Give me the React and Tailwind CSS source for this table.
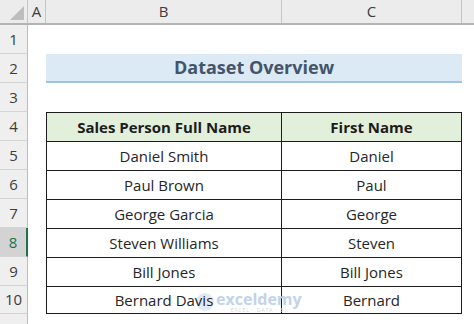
import React from 'react';

const rows = [
  ['Daniel Smith', 'Daniel'],
  ['Paul Brown', 'Paul'],
  ['George Garcia', 'George'],
  ['Steven Williams', 'Steven'],
  ['Bill Jones', 'Bill Jones'],
  ['Bernard Davis', 'Bernard'],
];

const heights = ['h-[29px]', 'h-[29px]', 'h-[29px]', 'h-[29px]', 'h-[29px]', 'h-[29px]', 'h-[29px]', 'h-[29px]', 'h-[29px]', 'h-[28px]', 'h-[29px]'];

const RowNum = ({ n, active }) => (
  <div
    className={`w-[28px] shrink-0 flex items-center justify-center border-b border-[#d4d4d4] text-[15px] ${
      active
        ? 'bg-[#d3d3d3] text-[#217346] border-r-2 border-r-[#217346]'
        : 'bg-[#efefef] text-[#3c3c3c] border-r border-r-[#bdbdbd]'
    }`}
  >
    {n}
  </div>
);

// faint site watermark sitting over the last row
const Watermark = () => (
  <div className="absolute left-[148px] top-[4px] flex items-center gap-[1px] pointer-events-none">
    <svg width="20" height="20" viewBox="0 0 20 20">
      <circle cx="10" cy="10" r="9" fill="#e3eaf5" />
    </svg>
    <div className="flex flex-col items-center leading-none">
      <span className="text-[16px] font-bold text-[#c3d3ea]">exceldemy</span>
      <span className="text-[5px] text-[#cbd5e4] tracking-[1px] mt-[1px]">EXCEL · DATA · BI</span>
    </div>
  </div>
);

export default function App() {
  return (
    <div
      className="w-[474px] h-[324px] overflow-hidden bg-white text-[#262626]"
      style={{ fontFamily: '"Open Sans", "Noto Sans", sans-serif' }}
    >
      {/* column header */}
      <div className="flex h-[25px] bg-[#ececec] border-b-2 border-[#b4b4b4] text-[15px] text-[#3c3c3c]">
        <div className="w-[28px] shrink-0 border-r border-[#c6c6c6] flex items-end justify-end pr-[3px] pb-[3px]">
          <svg width="14" height="14" viewBox="0 0 14 14">
            <polygon points="14,0 14,14 0,14" fill="#bdbdbd" />
          </svg>
        </div>
        <div className="w-[18px] shrink-0 border-r border-[#c6c6c6] flex items-center justify-center">A</div>
        <div className="w-[236px] shrink-0 border-r border-[#c6c6c6] flex items-center justify-center">B</div>
        <div className="w-[180px] shrink-0 border-r border-[#c6c6c6] flex items-center justify-center">C</div>
        <div className="flex-1" />
      </div>

      {/* row 1 */}
      <div className={`flex ${heights[0]}`}>
        <RowNum n={1} />
        <div className="flex-1" />
      </div>

      {/* row 2 */}
      <div className={`flex ${heights[1]}`}>
        <RowNum n={2} />
        <div className="w-[18px] shrink-0" />
        <div className="w-[416px] shrink-0 bg-[#dceaf6] border-b-2 border-[#9fc3e5] flex items-center justify-center text-[18px] font-bold text-[#44546a]">
          Dataset Overview
        </div>
        <div className="flex-1" />
      </div>

      {/* row 3 */}
      <div className={`flex ${heights[2]}`}>
        <RowNum n={3} />
        <div className="flex-1" />
      </div>

      {/* row 4 header */}
      <div className={`flex ${heights[3]}`}>
        <RowNum n={4} />
        <div className="w-[18px] shrink-0" />
        <div className="w-[235px] shrink-0 bg-[#e2efda] border-l border-t border-[#1c1c1c] flex items-center justify-center text-[15px] font-bold text-[#1c1c1c]">
          Sales Person Full Name
        </div>
        <div className="w-[181px] shrink-0 bg-[#e2efda] border-l border-r border-t border-[#1c1c1c] flex items-center justify-center text-[15px] font-bold text-[#1c1c1c]">
          First Name
        </div>
        <div className="flex-1" />
      </div>

      {rows.map(([full, first], i) => {
        const last = i === rows.length - 1;
        return (
          <div key={full} className={`flex ${heights[4 + i]}`}>
            <RowNum n={5 + i} active={i === 3} />
            <div className="w-[18px] shrink-0" />
            <div
              className={`relative w-[235px] shrink-0 border-l border-t border-[#1c1c1c] flex items-center justify-center text-[15px] ${
                last ? 'border-b' : ''
              }`}
            >
              {last && <Watermark />}
              <span className="relative">{full}</span>
            </div>
            <div
              className={`w-[181px] shrink-0 border-l border-r border-t border-[#1c1c1c] flex items-center justify-center text-[15px] ${
                last ? 'border-b' : ''
              }`}
            >
              {first}
            </div>
            <div className="flex-1" />
          </div>
        );
      })}

      {/* row 11, cut by the window edge */}
      <div className={`flex ${heights[10]}`}>
        <div className="w-[28px] shrink-0 bg-[#efefef] border-r border-[#bdbdbd]" />
        <div className="flex-1" />
      </div>
    </div>
  );
}
